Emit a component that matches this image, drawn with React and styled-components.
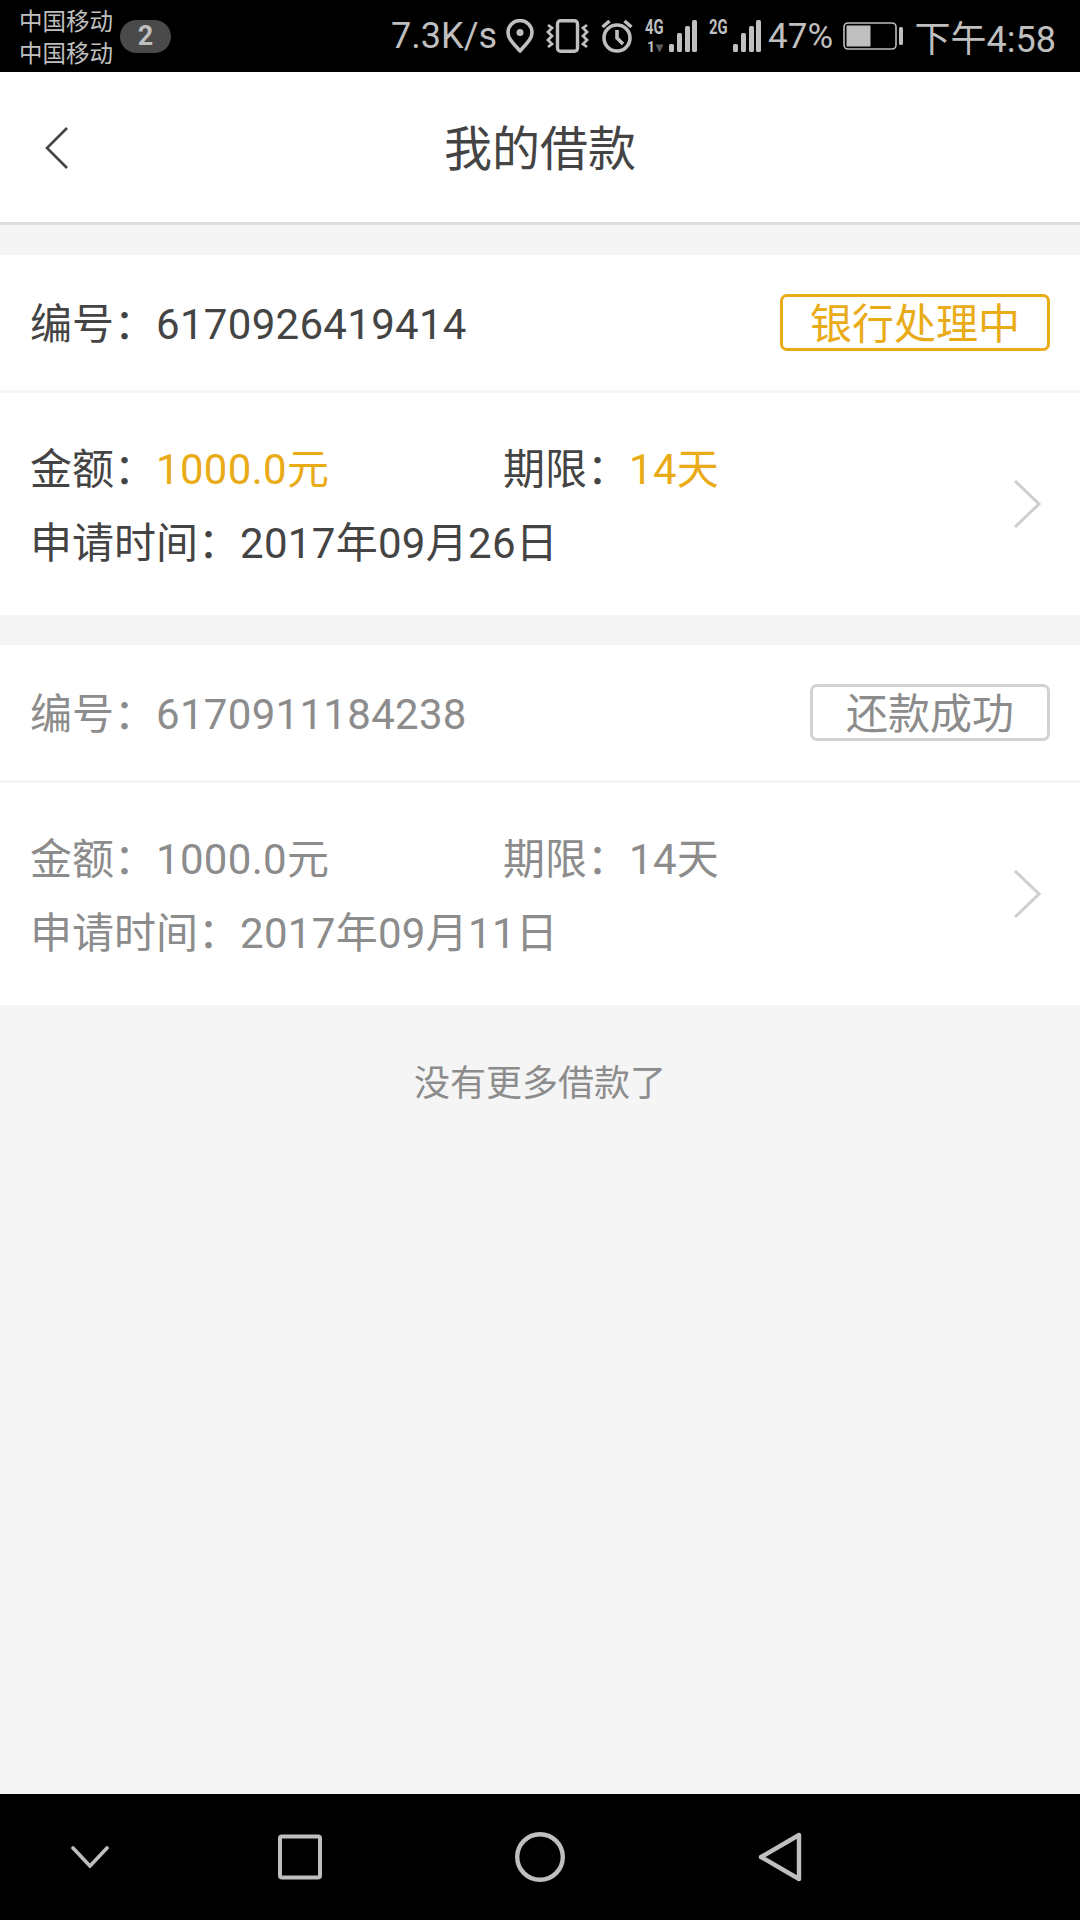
import React from "react";
import styled, { createGlobalStyle } from "styled-components";

const GOLD = "#e9ab17";
const DARK = "#444444";
const MUTED = "#8c8c8c";
const ICON = "#bfbfbf";

const loans = [
  { id: "6170926419414", status: "银行处理中", amount: "1000.0元", term: "14天", date: "2017年09月26日", active: true },
  { id: "6170911184238", status: "还款成功", amount: "1000.0元", term: "14天", date: "2017年09月11日", active: false },
];

const App = () => {
  return (
    <>
      <GlobalStyle />
      <Page>
        <StatusBar>
          <Carriers>
            <span>中国移动</span>
            <span>中国移动</span>
          </Carriers>
          <SimBadge>2</SimBadge>
          <StatusRight>
            <Speed>7.3K/s</Speed>
            <svg width="28" height="34" viewBox="0 0 28 34" fill="none" stroke={ICON} strokeWidth="3.6">
              <path d="M14 32C7 24 2 19.500 2 13.500a12 12 0 0 1 24 0C26 19.500 21 24 14 32Z" strokeLinejoin="round" />
              <circle cx="14" cy="13.500" r="3.500" fill={ICON} stroke="none" />
            </svg>
            <VibrateIcon />
            <AlarmIcon />
            <SignalIcon label="4G" sub />
            <SignalIcon label="2G" />
            <Percent>47%</Percent>
            <BatteryIcon />
            <Clock>下午4:58</Clock>
          </StatusRight>
        </StatusBar>

        <Header>
          <BackButton>
            <svg width="24" height="42" viewBox="0 0 24 42" fill="none" stroke={DARK} strokeWidth="2.600">
              <path d="M22 1 2 21l20 20" />
            </svg>
          </BackButton>
          <Title>我的借款</Title>
        </Header>

        <Main>
          {loans.map((loan) => (
            <Card key={loan.id} $active={loan.active}>
              <CardTop>
                <LoanNumber>
                  编号：<Figure>{loan.id}</Figure>
                </LoanNumber>
                <Tag $active={loan.active}>{loan.status}</Tag>
              </CardTop>
              <CardBody>
                <Details>
                  <DetailRow>
                    <AmountCell>
                      金额：<Value $active={loan.active}>{loan.amount}</Value>
                    </AmountCell>
                    <span>
                      期限：<Value $active={loan.active}>{loan.term}</Value>
                    </span>
                  </DetailRow>
                  <DetailRow>
                    申请时间：<Figure>{loan.date}</Figure>
                  </DetailRow>
                </Details>
                <svg width="28" height="48" viewBox="0 0 28 48" fill="none" stroke="#cfcfcf" strokeWidth="3">
                  <path d="M2 1l24 23L2 47" />
                </svg>
              </CardBody>
            </Card>
          ))}
          <EndNote>没有更多借款了</EndNote>
        </Main>

        <NavBar>
          <NavSlot>
            <svg width="38" height="22" viewBox="0 0 38 22" fill="none" stroke={ICON} strokeWidth="3.600" strokeLinecap="round">
              <path d="M2 2l17 18L36 2" />
            </svg>
          </NavSlot>
          <NavSlot>
            <svg width="44" height="46" viewBox="0 0 44 46" fill="none" stroke={ICON} strokeWidth="4">
              <rect x="2" y="2.500" width="40" height="41" rx="2" />
            </svg>
          </NavSlot>
          <NavSlot>
            <svg width="50" height="50" viewBox="0 0 50 50" fill="none" stroke={ICON} strokeWidth="4.400">
              <circle cx="25" cy="25" r="22.800" />
            </svg>
          </NavSlot>
          <NavSlot>
            <svg width="44" height="50" viewBox="0 0 44 50" fill="none" stroke={ICON} strokeWidth="4.400" strokeLinejoin="round">
              <path d="M41 3v44L3 25Z" />
            </svg>
          </NavSlot>
        </NavBar>
      </Page>
    </>
  );
};

const VibrateIcon = () => (
  <svg width="43" height="34" viewBox="0 0 43 34" fill="none" stroke={ICON} strokeWidth="3.400">
    <rect x="11.500" y="1.700" width="20" height="30.600" rx="3" />
    <path d="M2 6l4 3-4 4 4 4-4 4 4 4-4 3M41 6l-4 3 4 4-4 4 4 4-4 4 4 3" strokeWidth="2.800" />
  </svg>
);

const AlarmIcon = () => (
  <svg width="32" height="34" viewBox="0 0 32 34" fill="none" stroke={ICON} strokeWidth="3.600">
    <circle cx="16" cy="19" r="13" />
    <path d="M16 11v8l6 6M1.500 8l7-6M30.500 8l-7-6" />
  </svg>
);

const BatteryIcon = () => (
  <BatteryWrap>
    <svg width="60" height="28" viewBox="0 0 60 28" fill="none">
      <rect x="1" y="1" width="52" height="26" rx="4" stroke={ICON} strokeWidth="1.600" />
      <rect x="3.500" y="3.500" width="24" height="21" fill={ICON} />
      <rect x="56" y="5" width="4" height="18" rx="1.500" fill={ICON} />
    </svg>
  </BatteryWrap>
);

const SignalIcon = ({ label, sub }) => (
  <SignalWrap>
    <NetworkLabel>
      <LabelText>{label}</LabelText>
      {sub && (
        <SubLabel>
          1<i>▾</i>
        </SubLabel>
      )}
    </NetworkLabel>
    <svg width="28" height="34" viewBox="0 0 28 34" fill={ICON}>
      <rect x="0" y="25" width="5" height="8" rx="1.500" />
      <rect x="8" y="14" width="5" height="19" rx="1.500" />
      <rect x="16" y="7" width="5" height="26" rx="1.500" />
      <rect x="23" y="1" width="5" height="32" rx="1.500" />
    </svg>
  </SignalWrap>
);

const GlobalStyle = createGlobalStyle`
  html, body {
    margin: 0;
    padding: 0;
  }
  body {
    background: #f5f5f5;
    font-family: Roboto, "Noto Sans CJK SC", sans-serif;
  }
`;

const Page = styled.div`
  width: 1080px;
  height: 1920px;
  display: flex;
  flex-direction: column;
  overflow: hidden;
`;

const StatusBar = styled.div`
  height: 72px;
  flex: none;
  display: flex;
  align-items: center;
  padding: 0 24px 0 19px;
  background: #000;
  color: ${ICON};
`;

const Carriers = styled.div`
  display: flex;
  flex-direction: column;
  padding-top: 3px;
  font-size: 23.5px;
  line-height: 32px;
  margin-right: 7px;
`;

const SimBadge = styled.div`
  width: 51px;
  height: 33px;
  border-radius: 17px;
  background: #4a4a4a;
  font-size: 27px;
  font-weight: 700;
  line-height: 33px;
  text-align: center;
`;

const StatusRight = styled.div`
  margin-left: auto;
  display: flex;
  align-items: center;
  gap: 12px;
`;

const Speed = styled.span`
  font-size: 36px;
  margin-right: -3px;
`;

const SignalWrap = styled.div`
  display: flex;
  align-items: center;
  gap: 6px;
`;

const NetworkLabel = styled.div`
  width: 18px;
  height: 34px;
  display: flex;
  flex-direction: column;
  justify-content: space-between;
  font-weight: 700;
`;

const LabelText = styled.span`
  display: block;
  font-size: 20px;
  line-height: 16px;
  transform: scaleX(0.74);
  transform-origin: left center;
`;

const SubLabel = styled.span`
  display: block;
  font-size: 14px;
  line-height: 12px;
  padding-left: 2px;

  i {
    font-style: normal;
    color: #5c5c5c;
    margin-left: 1px;
  }
`;

const Percent = styled.span`
  font-size: 35px;
  margin-left: -5px;
`;

const BatteryWrap = styled.div`
  display: flex;
  margin-left: -2.5px;
`;

const Clock = styled.span`
  font-size: 36px;
`;

const Header = styled.div`
  position: relative;
  height: 150px;
  flex: none;
  display: flex;
  align-items: center;
  justify-content: center;
  background: #fff;
  border-bottom: 3px solid #dddddd;
`;

const BackButton = styled.div`
  position: absolute;
  left: 45px;
  top: 55px;
  line-height: 0;
`;

const Title = styled.div`
  font-size: 48px;
  color: ${DARK};
  padding-bottom: 5px;
`;

const Main = styled.div`
  flex: 1;
  display: flex;
  flex-direction: column;
  gap: 30px;
  padding-top: 30px;
  background: #f5f5f5;
`;

const Card = styled.div`
  background: #fff;
  font-size: 42px;
  color: ${(props) => (props.$active ? DARK : MUTED)};
`;

const CardTop = styled.div`
  height: 135px;
  display: flex;
  align-items: center;
  justify-content: space-between;
  padding: 0 30px;
  border-bottom: 3px solid #f5f5f5;
`;

const LoanNumber = styled.span`
  padding-bottom: 4px;
`;

const Figure = styled.span`
  letter-spacing: 0.3px;
`;

const Tag = styled.div`
  height: 57px;
  box-sizing: border-box;
  display: flex;
  align-items: center;
  padding: 0 ${(props) => (props.$active ? "27px" : "33px")} 3px;
  border: 3px solid ${(props) => (props.$active ? GOLD : "#d2d2d2")};
  border-radius: 7px;
  margin-top: -1px;
  color: ${(props) => (props.$active ? GOLD : MUTED)};
`;

const CardBody = styled.div`
  height: 222px;
  display: flex;
  align-items: center;
  justify-content: space-between;
  padding: 0 39px 0 30px;
`;

const Details = styled.div`
  display: flex;
  flex-direction: column;
`;

const DetailRow = styled.div`
  display: flex;
  box-sizing: border-box;
  height: 74px;
  padding-bottom: 3px;
  align-items: center;
  white-space: pre;
`;

const AmountCell = styled.span`
  width: 473px;
`;

const Value = styled(Figure)`
  color: ${(props) => (props.$active ? GOLD : MUTED)};
`;

const EndNote = styled.div`
  margin-top: 24px;
  text-align: center;
  font-size: 36px;
  line-height: 50px;
  color: ${MUTED};
`;

const NavBar = styled.div`
  height: 126px;
  flex: none;
  display: grid;
  grid-template-columns: 180px repeat(3, 240px);
  background: #000;
`;

const NavSlot = styled.div`
  display: flex;
  align-items: center;
  justify-content: center;
`;

export default App;
